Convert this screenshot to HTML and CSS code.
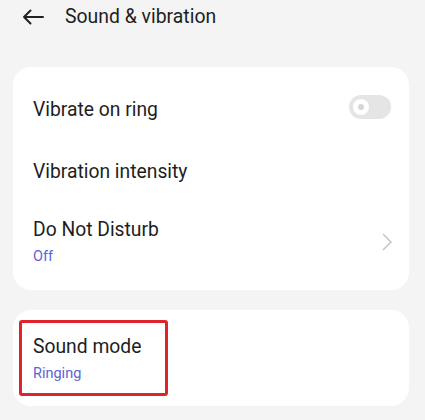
FILE: index.html
```html
<!DOCTYPE html>
<html>
<head>
<meta charset="utf-8">
<link rel="stylesheet" href="styles.css">
</head>
<body>
<header class="topbar">
  <svg class="back" width="22" height="16" viewBox="0 0 22 16"><path d="M21 8H2M8.5 1.5L2 8l6.5 6.5" fill="none" stroke="#222" stroke-width="2" stroke-linecap="round" stroke-linejoin="round"/></svg>
  <h1 class="title">Sound &amp; vibration</h1>
</header>
<main class="content">
  <section class="card card-main">
    <div class="row row-first">
      <span class="label">Vibrate on ring</span>
      <span class="toggle"><span class="knob"></span></span>
    </div>
    <div class="row row-second">
      <span class="label">Vibration intensity</span>
    </div>
    <div class="row row-third">
      <div class="text">
        <div class="label">Do Not Disturb</div>
        <div class="sub">Off</div>
      </div>
      <svg class="chev" width="10" height="18" viewBox="0 0 10 18"><path d="M1.5 1.5L9 9l-7.5 7.5" fill="none" stroke="#c4c4c4" stroke-width="1.5" stroke-linecap="round" stroke-linejoin="round"/></svg>
    </div>
  </section>
  <section class="card card-mode">
    <div class="highlight">
      <div class="label">Sound mode</div>
      <div class="sub">Ringing</div>
    </div>
  </section>
</main>
</body>
</html>
```
FILE: styles.css
```css
html, body {
  margin: 0;
  padding: 0;
  background: #f4f4f4;
}
body {
  font-family: Roboto, "Liberation Sans", sans-serif;
  color: #1e1e1e;
  width: 425px;
  height: 420px;
  overflow: hidden;
}
.topbar {
  display: flex;
  align-items: center;
  height: 34px;
  padding-left: 22px;
}
.back {
  display: block;
}
.title {
  margin: 0 0 0 21px;
  font-size: 19.4px;
  font-weight: 400;
  line-height: 24px;
  color: #1e1e1e;
}
.content {
  padding: 33px 16px 0 13px;
  display: flex;
  flex-direction: column;
  gap: 20px;
}
.card {
  background: #fff;
  border-radius: 18px;
}
.card-main {
  height: 223px;
  box-sizing: border-box;
  padding: 31px 18px 0 20px;
}
.row {
  display: flex;
  align-items: center;
  justify-content: space-between;
}
.label {
  font-size: 19.3px;
  line-height: 24px;
  color: #1e1e1e;
}
.sub {
  font-size: 14.5px;
  line-height: 18px;
  color: #5b63d8;
  margin-top: 6px;
}
.row-second {
  margin-top: 38px;
}
.row-third {
  margin-top: 34px;
}
.toggle {
  width: 42px;
  height: 24px;
  margin-top: -6px;
  border-radius: 12px;
  background: #e5e5e5;
  display: flex;
  align-items: center;
  padding-left: 4px;
  box-sizing: border-box;
}
.knob {
  width: 16px;
  height: 16px;
  border-radius: 50%;
  background: #fff;
  display: flex;
  align-items: center;
  justify-content: center;
}
.knob::after {
  content: "";
  width: 6px;
  height: 6px;
  border-radius: 50%;
  background: #d6d6d6;
}
.chev {
  display: block;
  margin-right: -1px;
}
.card-mode {
  height: 96px;
  box-sizing: border-box;
  padding: 10px 6px;
}
.highlight {
  width: 149px;
  height: 76px;
  box-sizing: border-box;
  border: 3px solid #e0222b;
  border-radius: 3px;
  padding: 12px 0 0 11px;
}
```
